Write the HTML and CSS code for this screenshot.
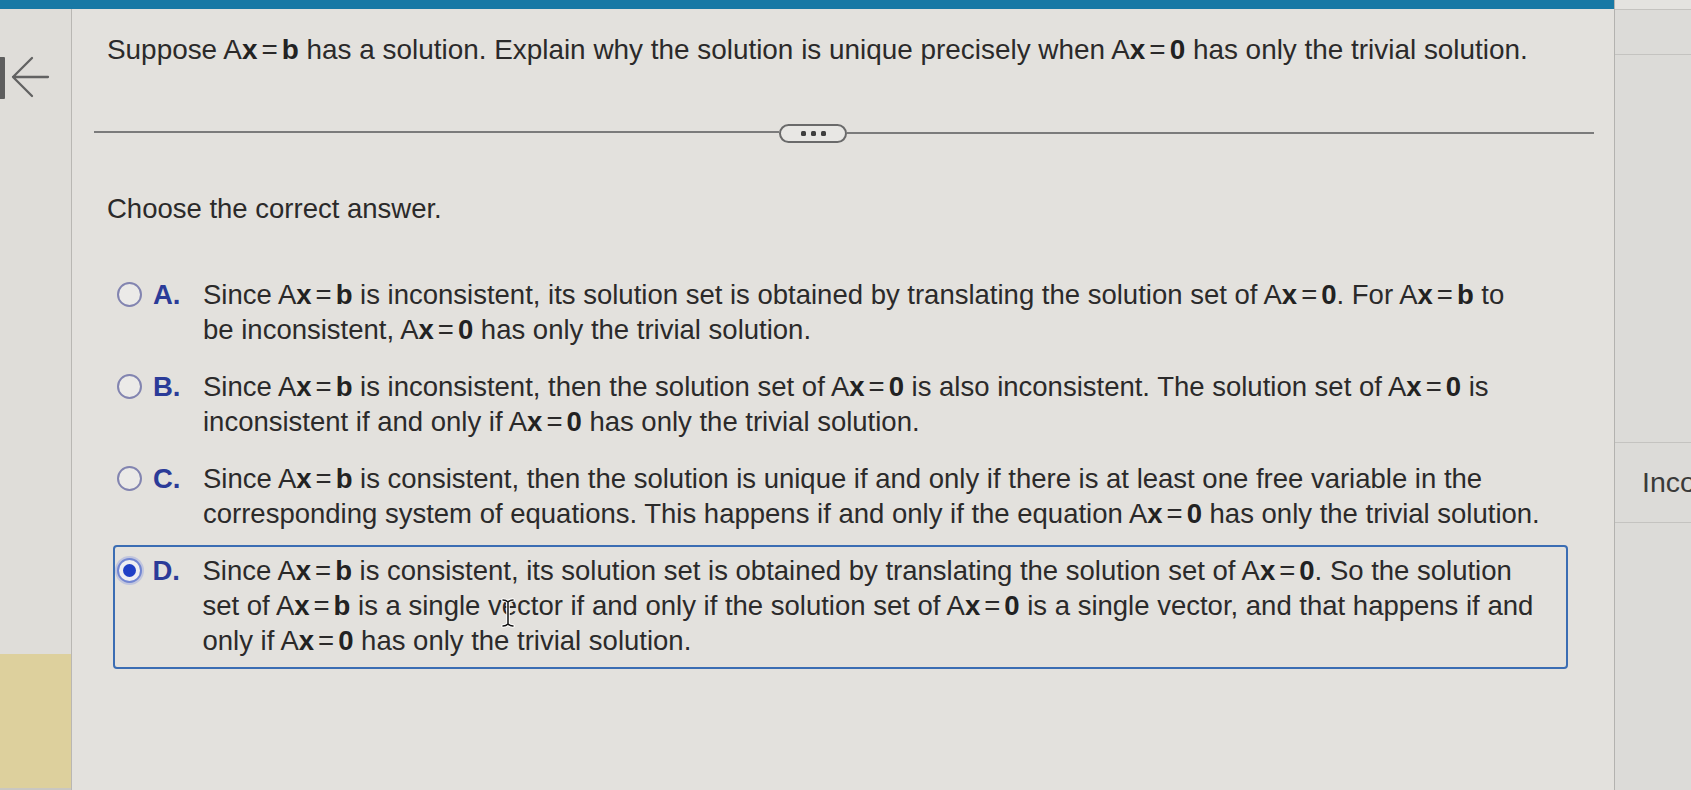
FILE: index.html
```html
<!DOCTYPE html>
<html lang="en">
<head>
<meta charset="utf-8">
<title>Question</title>
<link rel="stylesheet" href="styles.css">
</head>
<body>
<div class="screen">
  <div class="app">
    <div class="topbar"></div>
    <div class="body">
      <div class="rail">
        <div class="back">
          <span class="back-bar"></span>
          <svg class="back-arrow" width="40" height="44" viewBox="0 0 40 44" aria-hidden="true">
            <path d="M38 21 H3 M22 2 L3 21 L22 40" fill="none" stroke="#626262" stroke-width="2.3" stroke-linecap="round" stroke-linejoin="round"/>
          </svg>
        </div>
        <div class="rail-fill"></div>
        <div class="rail-note"></div>
      </div>
      <main class="content">
        <p class="question">Suppose <span class="m">A<b>x</b><span class="eq">=</span><b>b</b></span> has a solution. Explain why the solution is unique precisely when <span class="m">A<b>x</b><span class="eq">=</span><b>0</b></span> has only the trivial solution.</p>
        <div class="divider">
          <span class="rule rule-left"></span>
          <button class="more" type="button"><i></i><i></i><i></i></button>
          <span class="rule rule-right"></span>
        </div>
        <p class="prompt">Choose the correct answer.</p>
        <ul class="options">
          <li class="option">
            <span class="radio"></span>
            <span class="letter">A.</span>
            <span class="text">Since <span class="m">A<b>x</b><span class="eq">=</span><b>b</b></span> is inconsistent, its solution set is obtained by translating the solution set of <span class="m">A<b>x</b><span class="eq">=</span><b>0</b></span>. For <span class="m">A<b>x</b><span class="eq">=</span><b>b</b></span> to<br>be inconsistent, <span class="m">A<b>x</b><span class="eq">=</span><b>0</b></span> has only the trivial solution.</span>
          </li>
          <li class="option">
            <span class="radio"></span>
            <span class="letter">B.</span>
            <span class="text">Since <span class="m">A<b>x</b><span class="eq">=</span><b>b</b></span> is inconsistent, then the solution set of <span class="m">A<b>x</b><span class="eq">=</span><b>0</b></span> is also inconsistent. The solution set of <span class="m">A<b>x</b><span class="eq">=</span><b>0</b></span> is inconsistent if and only if <span class="m">A<b>x</b><span class="eq">=</span><b>0</b></span> has only the trivial solution.</span>
          </li>
          <li class="option">
            <span class="radio"></span>
            <span class="letter">C.</span>
            <span class="text">Since <span class="m">A<b>x</b><span class="eq">=</span><b>b</b></span> is consistent, then the solution is unique if and only if there is at least one free variable in the corresponding system of equations. This happens if and only if the equation <span class="m">A<b>x</b><span class="eq">=</span><b>0</b></span> has only the trivial solution.</span>
          </li>
          <li class="option selected">
            <span class="radio"><span class="dot"></span></span>
            <span class="letter">D.</span>
            <span class="text">Since <span class="m">A<b>x</b><span class="eq">=</span><b>b</b></span> is consistent, its solution set is obtained by translating the solution set of <span class="m">A<b>x</b><span class="eq">=</span><b>0</b></span>. So the solution set of <span class="m">A<b>x</b><span class="eq">=</span><b>b</b></span> is a single v<span class="caret-at">e<svg class="ibeam" width="14" height="30" viewBox="0 0 14 30" aria-hidden="true"><path d="M2 2 Q5 2 7 4 Q9 2 12 2 M7 4 V26 M2 28 Q5 28 7 26 Q9 28 12 28" fill="none" stroke="#ffffff" stroke-width="3.6" stroke-linecap="round"/><path d="M2 2 Q5 2 7 4 Q9 2 12 2 M7 4 V26 M2 28 Q5 28 7 26 Q9 28 12 28" fill="none" stroke="#111111" stroke-width="1.5" stroke-linecap="round"/></svg></span>ctor if and only if the solution set of <span class="m">A<b>x</b><span class="eq">=</span><b>0</b></span> is a single vector, and that happens if and only if <span class="m">A<b>x</b><span class="eq">=</span><b>0</b></span> has only the trivial solution.</span>
          </li>
        </ul>
      </main>
    </div>
  </div>
  <aside class="side">
    <div class="side-cell side-top"></div>
    <div class="side-cell side-second"></div>
    <div class="side-gap"></div>
    <div class="side-cell side-status">Incorrect</div>
    <div class="side-rest"></div>
  </aside>
</div>
</body>
</html>
```

FILE: styles.css
```css
* { box-sizing: border-box; }

html, body {
  margin: 0;
  padding: 0;
}

body {
  width: 1691px;
  height: 790px;
  overflow: hidden;
  background: #e2e0dc;
  font-family: "Liberation Sans", Arial, Helvetica, sans-serif;
  color: #2b2a2a;
}

.screen {
  display: grid;
  grid-template-columns: 1614px 77px;
  height: 790px;
}

.app {
  display: flex;
  flex-direction: column;
  min-width: 0;
}

.topbar {
  height: 9px;
  background: #1879a5;
  flex: none;
}

.body {
  flex: 1;
  display: flex;
  min-height: 0;
}

/* Left rail */
.rail {
  width: 72px;
  flex: none;
  display: flex;
  flex-direction: column;
  background: #dfddd9;
  border-right: 1.5px solid #b9b7b3;
}

.back {
  display: flex;
  align-items: center;
  gap: 5px;
  margin-top: 48px;
  height: 42px;
}

.back-bar {
  width: 5px;
  height: 42px;
  background: #5e5e5e;
  border-radius: 0 1px 1px 0;
}

.back-arrow {
  display: block;
}

.rail-fill {
  flex: 1;
}

.rail-note {
  height: 136px;
  background: #ddd09d;
  border-bottom: 2px solid #c9c7c2;
}

/* Content */
.content {
  flex: 1;
  min-width: 0;
  padding: 23px 20px 0 22px;
  background: #e3e1dd;
}

.question,
.prompt {
  margin: 0;
  padding-left: 13px;
  font-size: 27.5px;
  line-height: 35px;
  white-space: nowrap;
}

.question {
  font-size: 27.9px;
}

.m {
  white-space: nowrap;
}

.m b {
  font-weight: 700;
  color: #222;
}

.eq {
  margin: 0 4px;
}

.divider {
  display: flex;
  align-items: center;
  margin-top: 57px;
  height: 19px;
}

.rule {
  height: 2px;
  background: #7b7b7b;
}

.rule-left {
  width: 685px;
  flex: none;
  margin-top: -4px;
}

.rule-right {
  flex: 1;
  margin-top: -2px;
}

.more {
  flex: none;
  width: 68px;
  height: 19px;
  margin: 0;
  padding: 0;
  border: 2px solid #6a6a6a;
  border-radius: 10px;
  background: #e8e7e4;
  display: flex;
  align-items: center;
  justify-content: center;
  gap: 5px;
}

.more i {
  width: 5px;
  height: 5px;
  border-radius: 1.5px;
  background: #3f3f3f;
}

.prompt {
  margin-top: 48px;
}

.options {
  list-style: none;
  margin: 43px 0 0 19px;
  padding: 0;
  width: 1455px;
  display: flex;
  flex-direction: column;
  gap: 6px;
}

.option {
  display: flex;
  align-items: flex-start;
  padding: 6px 21px 6px 2px;
  border: 2px solid transparent;
  border-radius: 4px;
  font-size: 27.5px;
  line-height: 35px;
}

.option.selected {
  border: 2.5px solid #3b6db3;
  padding: 5.5px 20.5px 9px 1.5px;
}

.radio {
  flex: none;
  width: 25px;
  height: 25px;
  margin-top: 5px;
  border: 2px solid #8284b0;
  border-radius: 50%;
  background: #ebeae8;
  display: flex;
  align-items: center;
  justify-content: center;
}

.selected .radio {
  border-color: #7286d2;
  box-shadow: 0 0 0 2px rgba(150, 165, 225, 0.45);
  background: #eeeef2;
}

.dot {
  width: 13px;
  height: 13px;
  border-radius: 50%;
  background: #1f3fc6;
}

.letter {
  flex: none;
  width: 50px;
  margin-left: 11px;
  font-weight: 700;
  color: #2b3b98;
}

.text {
  flex: 1;
  min-width: 0;
}

.caret-at {
  position: relative;
}

.ibeam {
  position: absolute;
  left: 50%;
  top: 8px;
  margin-left: -8px;
}

/* Right side panel */
.side {
  display: flex;
  flex-direction: column;
  background: #dcdbd8;
  border-left: 1.5px solid #b3b2af;
  overflow: hidden;
}

.side-cell {
  border-bottom: 1.5px solid #c4c3c0;
}

.side-top {
  height: 10px;
  background: #e4e3e0;
}

.side-second {
  height: 45px;
}

.side-gap {
  height: 388px;
  border-bottom: 1.5px solid #c4c3c0;
}

.side-status {
  height: 80px;
  display: flex;
  align-items: center;
  padding-left: 27px;
  font-size: 28.5px;
  color: #3a3a3a;
  white-space: nowrap;
}

.side-rest {
  flex: 1;
}
```
